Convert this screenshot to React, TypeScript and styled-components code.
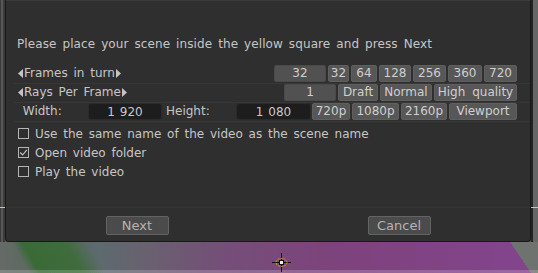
import React from 'react';
import styled, { createGlobalStyle } from 'styled-components';

const GlobalStyle = createGlobalStyle`
  html, body {
    margin: 0;
    padding: 0;
    background: #555555;
  }
  body {
    font-family: "DejaVu Sans", Verdana, sans-serif;
    -webkit-font-smoothing: antialiased;
  }
`;

const Viewport = styled.div`
  position: relative;
  width: 538px;
  height: 273px;
  overflow: hidden;
  background:
    linear-gradient(rgba(255, 255, 255, 0.18), rgba(255, 255, 255, 0.18)) 0 270px / 100% 3px no-repeat,
    linear-gradient(56deg, transparent 0 54%, #6f736f 54.5%) 100% 242px / 40px 31px no-repeat,
    linear-gradient(60deg, transparent 0 22%, #3a6a36 30%, #3f6c3c 62%, rgba(93, 106, 104, 0) 80%) 0 242px / 115px 31px no-repeat,
    linear-gradient(90deg, #666a66 0, #5e6a62 20px, #5d6a6e 100px, #6a6070 150px, #744f78 220px, #7d437c 330px, #82448a 500px) 0 242px / 100% 31px no-repeat,
    linear-gradient(90deg, #3a3a3a 0 1px, #575757 1px 3px, #3b3b3b 3px 5px, transparent 5px) 0 0 / 100% 242px no-repeat,
    linear-gradient(90deg, transparent 531px, #232323 531px 533px, #666 533px) 0 0 / 100% 242px no-repeat,
    #555555;
`;

const YellowEdge = styled.div`
  position: absolute;
  left: 0;
  right: 0;
  top: 207px;
  height: 1px;
  background: #e8d800;
`;

const Cursor3D = styled.svg`
  position: absolute;
  left: 272px;
  top: 253px;
`;

const Dialog = styled.div`
  position: relative;
  z-index: 1;
  margin-left: 5px;
  width: 526px;
  height: 242px;
  box-sizing: border-box;
  display: flex;
  flex-direction: column;
  padding: 35px 13px 0 11px;
  background: rgba(45, 45, 45, 0.94);
  border: 1px solid #181818;
  border-top: 1px solid #3a3a3a;
  border-radius: 0 0 4px 4px;
  color: #c6c6c6;
  font-size: 12px;
  word-spacing: 2px;
`;

const Message = styled.div`
  height: 16px;
  line-height: 16px;
  margin-bottom: 13px;
  white-space: nowrap;
  letter-spacing: 0.1px;
`;

const Row = styled.div`
  display: flex;
  align-items: flex-start;
  height: 18px;
  margin: 0 -13px 0 -3px;
  padding: 0 13px 0 3px;
  border-bottom: 1px solid #373737;
`;

const Label = styled.div<{ $w?: number; $gap?: number }>`
  display: flex;
  align-items: center;
  height: 17px;
  line-height: 17px;
  white-space: nowrap;
  flex: none;
  ${p => (p.$w ? `width: ${p.$w}px;` : '')}
  ${p => (p.$gap ? `margin-left: ${p.$gap}px;` : '')}
`;

const Arrow = styled.svg`
  flex: none;
  margin: 0 1px;
`;

const Group = styled.div`
  margin-left: auto;
  display: flex;
  gap: 2px;
`;

const Chip = styled.div<{ $w: number; $field?: boolean }>`
  width: ${p => p.$w}px;
  height: 17px;
  box-sizing: border-box;
  display: flex;
  align-items: center;
  justify-content: center;
  line-height: 17px;
  white-space: nowrap;
  word-spacing: 3px;
  color: #cfcfcf;
  background: ${p => (p.$field ? '#515151' : '#575757')};
  border: 1px solid ${p => (p.$field ? '#4a4a4a' : '#5f5f5f')};
  border-radius: 2px;
`;

const NumInput = styled.div<{ $w: number }>`
  width: ${p => p.$w}px;
  height: 17px;
  flex: none;
  box-sizing: border-box;
  display: flex;
  align-items: center;
  justify-content: center;
  background: #1d1d1d;
  border: 1px solid #2a2a2a;
  border-radius: 3px;
  color: #c8c8c8;
  word-spacing: 1px;
`;

const Checks = styled.div`
  margin-top: 2px;
  display: flex;
  flex-direction: column;
`;

const CheckRow = styled.div`
  display: flex;
  align-items: center;
  height: 19px;
  gap: 6px;
  padding-left: 1px;
  white-space: nowrap;
`;

const Box = styled.span`
  width: 11px;
  height: 11px;
  box-sizing: border-box;
  border: 1px solid #b4b4b4;
  display: flex;
  align-items: center;
  justify-content: center;
`;

const Footer = styled.div`
  margin: auto -13px 0 -11px;
  padding-bottom: 6px;
  display: grid;
  grid-template-columns: 1fr 1fr;
  justify-items: center;
`;

const Button = styled.div`
  width: 63px;
  height: 19px;
  box-sizing: border-box;
  display: flex;
  align-items: center;
  justify-content: center;
  background: #4b4b4b;
  border: 1px solid #636363;
  border-radius: 2px;
  color: #b4b4b4;
  font-size: 13px;
`;

const Tri = ({ dir }: { dir: 'l' | 'r' }) => (
  <Arrow width="5" height="9" viewBox="0 0 5 9">
    <path d={dir === 'l' ? 'M5 0 L0 4.5 L5 9 Z' : 'M0 0 L5 4.5 L0 9 Z'} fill="#c4c4c4" />
  </Arrow>
);

const Check = ({ checked, children }: { checked?: boolean; children: React.ReactNode }) => (
  <CheckRow>
    <Box>
      {checked && (
        <svg width="9" height="9" viewBox="0 0 9 9">
          <path d="M1.2 4.5 L3.6 7 L7.8 1.8" fill="none" stroke="#c8c8c8" strokeWidth="1.1" />
        </svg>
      )}
    </Box>
    <span>{children}</span>
  </CheckRow>
);

export default function App() {
  return (
    <>
      <GlobalStyle />
      <Viewport>
        <YellowEdge />
        <Cursor3D width="19" height="19" viewBox="0 0 19 19">
          <line x1="9.5" y1="0" x2="9.5" y2="19" stroke="#111" strokeWidth="1" />
          <line x1="0" y1="9.5" x2="19" y2="9.5" stroke="#111" strokeWidth="1" />
          <ellipse cx="9.5" cy="9.5" rx="5.5" ry="4" fill="none" stroke="#d9a020" strokeWidth="1" strokeDasharray="2 1" />
          <rect x="7.5" y="7.5" width="4" height="4" fill="#eee" stroke="#111" strokeWidth="1" />
        </Cursor3D>
        <Dialog>
          <Message>Please place your scene inside the yellow square and press Next</Message>

          <Row>
            <Label>
              <Tri dir="l" />
              Frames in turn
              <Tri dir="r" />
            </Label>
            <Group>
              <Chip $w={52} $field>32</Chip>
              <Chip $w={21}>32</Chip>
              <Chip $w={26}>64</Chip>
              <Chip $w={32}>128</Chip>
              <Chip $w={33}>256</Chip>
              <Chip $w={34}>360</Chip>
              <Chip $w={33}>720</Chip>
            </Group>
          </Row>

          <Row>
            <Label>
              <Tri dir="l" />
              Rays Per Frame
              <Tri dir="r" />
            </Label>
            <Group>
              <Chip $w={52} $field>1</Chip>
              <Chip $w={40}>Draft</Chip>
              <Chip $w={52}>Normal</Chip>
              <Chip $w={83}>High quality</Chip>
            </Group>
          </Row>

          <Row>
            <Label $w={71}>&nbsp;Width:</Label>
            <NumInput $w={74}>1 920</NumInput>
            <Label $w={70} $gap={4}>Height:</Label>
            <NumInput $w={75}>1 080</NumInput>
            <Group>
              <Chip $w={38}>720p</Chip>
              <Chip $w={47}>1080p</Chip>
              <Chip $w={46}>2160p</Chip>
              <Chip $w={68}>Viewport</Chip>
            </Group>
          </Row>

          <Checks>
            <Check>Use the same name of the video as the scene name</Check>
            <Check checked>Open video folder</Check>
            <Check>Play the video</Check>
          </Checks>

          <Footer>
            <Button>Next</Button>
            <Button>Cancel</Button>
          </Footer>
        </Dialog>
      </Viewport>
    </>
  );
}
